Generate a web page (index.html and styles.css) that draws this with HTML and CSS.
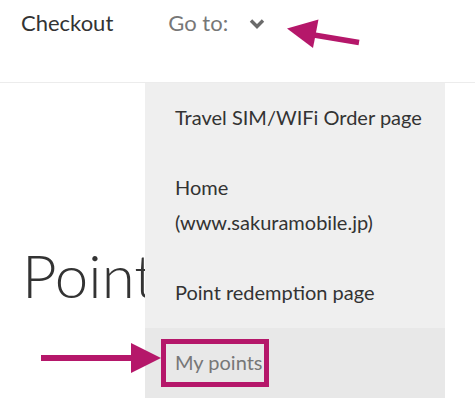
FILE: index.html
```html
<!DOCTYPE html>
<html>
<head>
<meta charset="utf-8">
<link rel="stylesheet" href="styles.css">
</head>
<body>
<header class="topbar">
  <a class="brand">Checkout</a>
  <div class="goto">
    <span>Go to:</span>
    <svg class="chev" width="16" height="12" viewBox="0 0 16 12"><path d="M2 2.5 L8 8.5 L14 2.5" fill="none" stroke="#6b6b6b" stroke-width="3.4"/></svg>
  </div>
</header>
<main class="content">
  <h1 class="title">Points</h1>
</main>
<ul class="menu">
  <li class="item">Travel SIM/WIFi Order page</li>
  <li class="item">Home<br>(www.sakuramobile.jp)</li>
  <li class="item">Point redemption page</li>
  <li class="item active">My points</li>
</ul>
<svg class="notes" width="475" height="420" viewBox="0 0 475 420">
  <line x1="314" y1="35" x2="359" y2="42.5" stroke="#b5176a" stroke-width="5.5"/>
  <polygon points="287,28.5 318.5,19.5 313,48" fill="#b5176a"/>
  <line x1="41" y1="358" x2="135" y2="358" stroke="#b5176a" stroke-width="6"/>
  <polygon points="131,343 161,358 131,373" fill="#b5176a"/>
  <rect x="163.5" y="341.5" width="103" height="43" fill="none" stroke="#b5176a" stroke-width="5"/>
</svg>
</body>
</html>
```
FILE: styles.css
```css
html, body {
  margin: 0;
  padding: 0;
  background: #fff;
}
body {
  font-family: "Lato", "Liberation Sans", sans-serif;
  color: #333;
  width: 475px;
  height: 420px;
  overflow: hidden;
  position: relative;
}
.topbar {
  display: flex;
  align-items: flex-start;
  height: 83px;
  border-bottom: 1px solid #ececec;
  box-sizing: border-box;
  padding: 9px 0 0 21px;
  font-size: 22px;
  line-height: 28px;
}
.brand {
  color: #333;
}
.goto {
  display: flex;
  align-items: center;
  margin-left: 55px;
  color: #777;
}
.chev {
  margin-left: 21px;
  margin-top: 1px;
}
.content {
  padding: 0 0 0 22px;
}
.title {
  margin: 157px 0 0;
  font-size: 60px;
  font-weight: 300;
  line-height: 70px;
  color: #333;
}
.menu {
  position: absolute;
  left: 145px;
  top: 83px;
  width: 300px;
  margin: 0;
  padding: 0;
  list-style: none;
  background: #efefef;
  font-size: 20px;
  line-height: 35px;
}
.item {
  padding: 17px 20px 18px 30px;
}
.item.active {
  background: #e8e8e8;
  color: #777;
}
.notes {
  position: absolute;
  left: 0;
  top: 0;
  pointer-events: none;
}
```
